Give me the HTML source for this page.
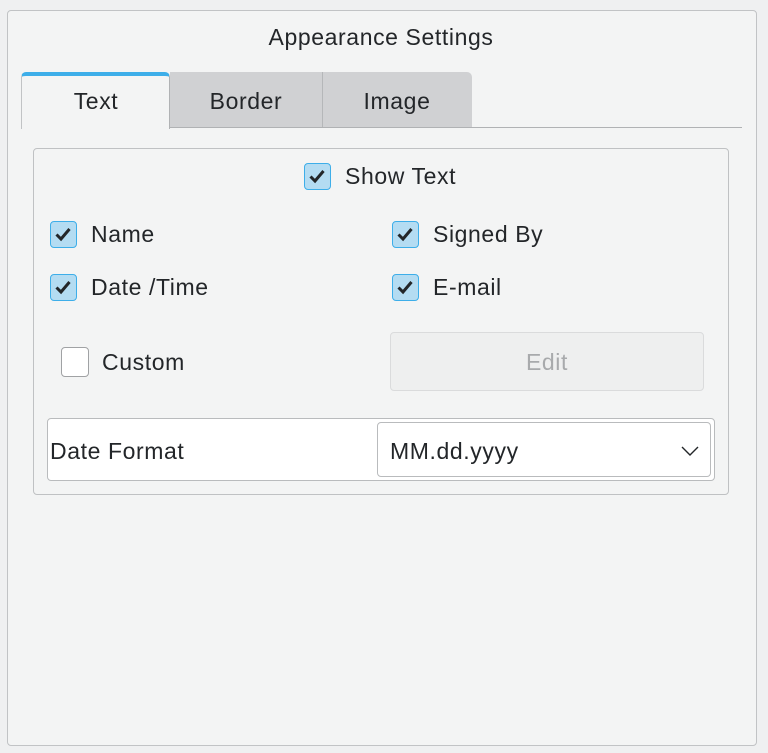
<!DOCTYPE html>
<html><head><style>
body{margin:0;width:768px;height:753px;background:#eff0f1;font-family:"Liberation Sans","DejaVu Sans",sans-serif;color:#232629;position:relative;overflow:hidden}
.a{position:absolute}
.t{font-size:23px;letter-spacing:0.6px;line-height:26px;white-space:nowrap}
.cb{position:absolute;width:27px;height:27px;box-sizing:border-box;border:1.5px solid #3daee9;background:#b4dcf2;border-radius:4px}
.cb svg{position:absolute;left:1px;top:1px}
.un{border:1.5px solid #a0a2a4;background:#fff}
</style></head><body>
<div class="a" style="left:7px;top:10px;width:748px;height:734px;border:1px solid #c1c3c5;border-radius:4px;background:#f3f4f4"></div>
<div class="a t" style="left:0;width:762px;top:24px;text-align:center">Appearance Settings</div>
<div class="a" style="left:170px;top:72px;width:302px;height:56px;background:#d0d1d3;border-radius:0 5px 0 0"></div>
<div class="a" style="left:322px;top:72px;width:1px;height:56px;background:#b5b7b9"></div>
<div class="a" style="left:170px;top:127px;width:572px;height:1px;background:#b0b2b4"></div>
<div class="a" style="left:21px;top:72px;width:149px;height:57px;background:#f3f4f4;border-left:1px solid #c1c3c5;border-right:1px solid #b0b2b4;border-radius:5px 5px 0 0;border-top:4px solid #3daee9;box-sizing:border-box"></div>
<div class="a t" style="left:22px;width:148px;top:88px;text-align:center">Text</div>
<div class="a t" style="left:170px;width:152px;top:88px;text-align:center">Border</div>
<div class="a t" style="left:322px;width:150px;top:88px;text-align:center">Image</div>
<div class="a" style="left:33px;top:148px;width:696px;height:347px;border:1px solid #bfc1c3;border-radius:4px;box-sizing:border-box"></div>
<div class="cb" style="left:304px;top:163px"><svg width="22" height="22" viewBox="0 0 22 22"><path d="M4.5 11.5l4.5 4.5 8.5-10" stroke="#232629" stroke-width="3" fill="none"/></svg></div>
<div class="a t" style="left:345px;top:163px">Show Text</div>
<div class="cb" style="left:50px;top:221px"><svg width="22" height="22" viewBox="0 0 22 22"><path d="M4.5 11.5l4.5 4.5 8.5-10" stroke="#232629" stroke-width="3" fill="none"/></svg></div>
<div class="a t" style="left:91px;top:221px">Name</div>
<div class="cb" style="left:392px;top:221px"><svg width="22" height="22" viewBox="0 0 22 22"><path d="M4.5 11.5l4.5 4.5 8.5-10" stroke="#232629" stroke-width="3" fill="none"/></svg></div>
<div class="a t" style="left:433px;top:221px">Signed By</div>
<div class="cb" style="left:50px;top:274px"><svg width="22" height="22" viewBox="0 0 22 22"><path d="M4.5 11.5l4.5 4.5 8.5-10" stroke="#232629" stroke-width="3" fill="none"/></svg></div>
<div class="a t" style="left:91px;top:274px">Date /Time</div>
<div class="cb" style="left:392px;top:274px"><svg width="22" height="22" viewBox="0 0 22 22"><path d="M4.5 11.5l4.5 4.5 8.5-10" stroke="#232629" stroke-width="3" fill="none"/></svg></div>
<div class="a t" style="left:433px;top:274px">E-mail</div>
<div class="cb un" style="left:61px;top:347px;width:28px;height:30px"></div>
<div class="a t" style="left:102px;top:349px">Custom</div>
<div class="a" style="left:390px;top:332px;width:314px;height:59px;border:1px solid #dadbdc;border-radius:4px;background:#eeefef;box-sizing:border-box"></div>
<div class="a t" style="left:390px;width:314px;top:349px;text-align:center;color:#a8aaac">Edit</div>
<div class="a" style="left:47px;top:418px;width:668px;height:63px;border:1px solid #b9bbbd;border-radius:4px;background:#fff;box-sizing:border-box"></div>
<div class="a t" style="left:50px;top:438px">Date Format</div>
<div class="a" style="left:377px;top:422px;width:334px;height:55px;border:1px solid #b9bbbd;border-radius:4px;background:#fff;box-sizing:border-box"></div>
<div class="a t" style="left:390px;top:438px">MM.dd.yyyy</div>
<svg class="a" style="left:680px;top:444px" width="20" height="14" viewBox="0 0 20 14"><path d="M2 3l8 8 8-8" stroke="#232629" stroke-width="1.4" fill="none"/></svg>
</body></html>
